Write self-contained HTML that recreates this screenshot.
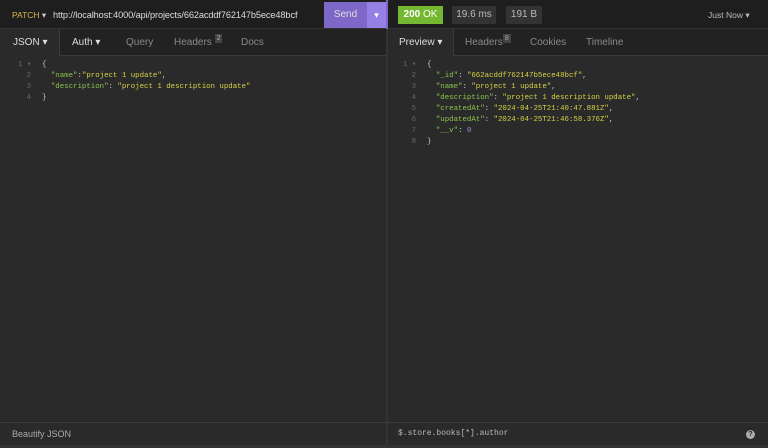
<!DOCTYPE html><html><head><style>
*{margin:0;padding:0;box-sizing:border-box}
body{width:768px;height:448px;background:#2a2a2a;font-family:"Liberation Sans",sans-serif;font-size:10px;color:#ccc;position:relative;overflow:hidden}
.a{position:absolute}
.top{top:0;height:29px;background:#1e1e1e;border-bottom:1px solid #333}
.tabs{top:29px;height:27px;background:#222;border-bottom:1px solid #3a3a3a}
.tab{position:absolute;top:0;height:27px;line-height:28px;color:#8a8a8a;font-size:10px}
.act{background:#2a2a2a;color:#ddd;border-right:1px solid #3a3a3a;height:28px}
.code{font-family:"Liberation Mono",monospace;font-size:7.4px;line-height:11px;white-space:pre}
.ln{color:#666;text-align:right;width:13px;display:inline-block;margin-right:11px}
.k{color:#8bc34a}.s{color:#d8d245}.n{color:#9b8fe0}
.badge{display:inline-block;background:#444;color:#aaa;font-size:7px;padding:0 2px;line-height:9px;vertical-align:top;margin-top:5px}
</style></head><body>
<div class="a top" style="left:0;width:768px"></div>
<div class="a" style="left:12px;top:10px;color:#d9b44a;font-size:8.5px">PATCH <span style="color:#ccc">▾</span></div>
<div class="a" style="left:53px;top:10px;color:#ddd;font-size:9.2px;letter-spacing:-0.1px">http://localhost:4000/api/projects/662acddf762147b5ece48bcf</div>
<div class="a" style="left:324px;top:2px;width:43px;height:26px;background:#7d68c7;color:#ddd;text-align:center;line-height:26px;font-size:10px">Send</div>
<div class="a" style="left:367px;top:2px;width:19px;height:26px;background:#9580e6;color:#fff;text-align:center;line-height:26px;font-size:9px">▾</div>
<div class="a" style="left:386px;top:0;width:2px;height:29px;background:#7d68c7"></div>
<div class="a" style="left:398px;top:6px;width:45px;height:18px;background:#74b730;color:#fff;font-weight:bold;line-height:18px;text-align:center;font-size:10px">200 <span style="font-weight:normal">OK</span></div>
<div class="a" style="left:452px;top:6px;width:44px;height:18px;background:#333;color:#bbb;line-height:18px;text-align:center">19.6 ms</div>
<div class="a" style="left:506px;top:6px;width:36px;height:18px;background:#333;color:#bbb;line-height:18px;text-align:center">191 B</div>
<div class="a" style="left:708px;top:10px;color:#bbb;font-size:8.5px">Just Now ▾</div>

<div class="a tabs" style="left:0;width:386px"></div>
<div class="a tabs" style="left:388px;width:380px"></div>
<div class="tab act" style="left:0;top:29px;width:60px;padding-left:13px">JSON ▾</div>
<div class="tab" style="left:72px;top:29px;color:#ddd">Auth ▾</div>
<div class="tab" style="left:126px;top:29px">Query</div>
<div class="tab" style="left:174px;top:29px">Headers <span class="badge">2</span></div>
<div class="tab" style="left:241px;top:29px">Docs</div>
<div class="tab act" style="left:388px;top:29px;width:66px;padding-left:11px">Preview ▾</div>
<div class="tab" style="left:465px;top:29px">Headers<span class="badge">8</span></div>
<div class="tab" style="left:530px;top:29px">Cookies</div>
<div class="tab" style="left:586px;top:29px">Timeline</div>

<div class="a" style="left:386px;top:29px;width:2px;height:419px;background:#333"></div>

<div class="a code" style="left:18px;top:60px"><span class="ln">1 ▾</span>{
<span class="ln">2</span>  <span class="k">"name"</span>:<span class="s">"project 1 update"</span>,
<span class="ln">3</span>  <span class="k">"description"</span>: <span class="s">"project 1 description update"</span>
<span class="ln">4</span>}</div>
<div class="a code" style="left:403px;top:60px"><span class="ln">1 ▾</span>{
<span class="ln">2</span>  <span class="k">"_id"</span>: <span class="s">"662acddf762147b5ece48bcf"</span>,
<span class="ln">3</span>  <span class="k">"name"</span>: <span class="s">"project 1 update"</span>,
<span class="ln">4</span>  <span class="k">"description"</span>: <span class="s">"project 1 description update"</span>,
<span class="ln">5</span>  <span class="k">"createdAt"</span>: <span class="s">"2024-04-25T21:40:47.881Z"</span>,
<span class="ln">6</span>  <span class="k">"updatedAt"</span>: <span class="s">"2024-04-25T21:46:58.376Z"</span>,
<span class="ln">7</span>  <span class="k">"__v"</span>: <span class="n">0</span>
<span class="ln">8</span>}</div>

<div class="a" style="left:0;top:422px;width:768px;height:1px;background:#3a3a3a"></div>
<div class="a" style="left:0;top:445px;width:768px;height:3px;background:#333"></div>
<div class="a" style="left:12px;top:429px;color:#aaa;font-size:9px">Beautify JSON</div>
<div class="a" style="left:398px;top:429px;color:#bbb;font-size:8px;font-family:'Liberation Mono',monospace">$.store.books[*].author</div>
<div class="a" style="left:746px;top:430px;width:9px;height:9px;border-radius:50%;background:#aaa;color:#222;font-size:7px;text-align:center;line-height:9px;font-weight:bold">?</div>
</body></html>
